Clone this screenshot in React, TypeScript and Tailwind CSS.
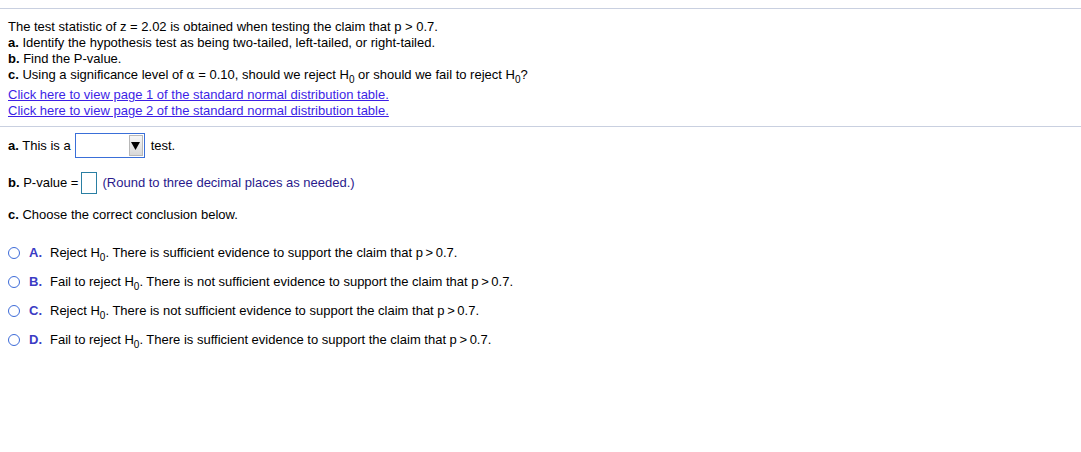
import React from 'react';

const Sub: React.FC<{ children: React.ReactNode }> = ({ children }) => (
  <span className="relative top-[4px] text-[10px] leading-none">{children}</span>
);

const H0 = () => (
  <>
    H<Sub>0</Sub>
  </>
);

const options = [
  { letter: 'A.', lead: 'Reject ', rest: '. There is sufficient evidence to support the claim that p\u2009>\u20090.7.' },
  { letter: 'B.', lead: 'Fail to reject ', rest: '. There is not sufficient evidence to support the claim that p\u2009>\u20090.7.' },
  { letter: 'C.', lead: 'Reject ', rest: '. There is not sufficient evidence to support the claim that p\u2009>\u20090.7.' },
  { letter: 'D.', lead: 'Fail to reject ', rest: '. There is sufficient evidence to support the claim that p\u2009>\u20090.7.' },
];

const App: React.FC = () => {
  return (
    <div className="w-[1081px] h-[452px] bg-white pt-[8px] text-[13px] leading-[16px] text-black font-['Liberation_Sans',Arial,sans-serif]">
      {/* question */}
      <div className="border-t border-[#c9d0e0] px-[8px] pt-[10px] pb-[7px]">
        <p>The test statistic of z = 2.02 is obtained when testing the claim that p &gt; 0.7.</p>
        <p><b>a.</b> Identify the hypothesis test as being two-tailed, left-tailed, or right-tailed.</p>
        <p><b>b.</b> Find the P-value.</p>
        <p>
          <b>c.</b> Using a significance level of <span className="font-['DejaVu_Serif',serif] text-[12px]">α</span> = 0.10, should we reject <H0 /> or should we fail to reject <H0 />?
        </p>
        <div className="mt-[4px] flex flex-col">
          <a className="text-[#3d1fe6] underline self-start" href="#">Click here to view page 1 of the standard normal distribution table.</a>
          <a className="text-[#3d1fe6] underline self-start" href="#">Click here to view page 2 of the standard normal distribution table.</a>
        </div>
      </div>

      {/* answers */}
      <div className="border-t border-[#c9d0e0] px-[8px] pt-[6px]">
        <div className="flex items-center gap-[4px]">
          <span><b>a.</b> This is a</span>
          <div className="w-[70px] h-[25px] border border-[#3a6fd8] flex justify-end items-center pr-[1px]">
            <div className="w-[14px] h-[21px] border border-[#b8b8b8] bg-gradient-to-b from-[#f6f6f6] to-[#d8d8d8] flex items-center justify-center">
              <svg width="9" height="9" viewBox="0 0 9 9"><path d="M0 1 H9 L4.5 9 Z" fill="#000" /></svg>
            </div>
          </div>
          <span className="ml-[2px]">test.</span>
        </div>

        <div className="flex items-center gap-[4px] mt-[14px]">
          <span><b>b.</b> P-value =</span>
          <div className="w-[16px] h-[22px] border border-[#2a7fa3] -ml-[1px]"></div>
          <span className="ml-[1px] text-[#2a1a8c]">(Round to three decimal places as needed.)</span>
        </div>

        <p className="mt-[13px]"><b>c.</b> Choose the correct conclusion below.</p>

        <div className="mt-[22px] flex flex-col gap-[13px]">
          {options.map((o) => (
            <div key={o.letter} className="flex items-center h-[16px]">
              <span className="w-[12px] h-[12px] rounded-full border border-[#3d6bd8]"></span>
              <b className="ml-[9px] w-[21px] text-[#3b3bc4]">{o.letter}</b>
              <span>
                {o.lead}
                <H0 />
                {o.rest}
              </span>
            </div>
          ))}
        </div>
      </div>
    </div>
  );
};

export default App;
